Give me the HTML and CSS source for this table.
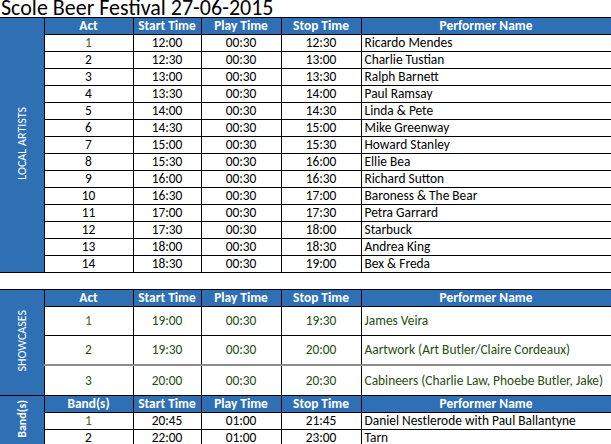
FILE: index.html
```html
<!DOCTYPE html>
<html>
<head>
<meta charset="utf-8">
<link rel="stylesheet" href="styles.css">
</head>
<body>
<div class="title">Scole Beer Festival 27-06-2015</div>
<table class="sched">
  <colgroup>
    <col class="c-label"><col class="c-act"><col class="c-start"><col class="c-play"><col class="c-stop"><col class="c-name">
  </colgroup>
  <tbody>
    <tr class="head">
      <td class="label" rowspan="15"><span class="vert">LOCAL ARTISTS</span></td>
      <td>Act</td><td>Start Time</td><td>Play Time</td><td>Stop Time</td><td>Performer Name</td>
    </tr>
    <tr><td class="first">1</td><td>12:00</td><td>00:30</td><td>12:30</td><td class="name">Ricardo Mendes</td></tr>
    <tr><td>2</td><td>12:30</td><td>00:30</td><td>13:00</td><td class="name">Charlie Tustian</td></tr>
    <tr><td>3</td><td>13:00</td><td>00:30</td><td>13:30</td><td class="name">Ralph Barnett</td></tr>
    <tr><td>4</td><td>13:30</td><td>00:30</td><td>14:00</td><td class="name">Paul Ramsay</td></tr>
    <tr><td>5</td><td>14:00</td><td>00:30</td><td>14:30</td><td class="name">Linda &amp; Pete</td></tr>
    <tr><td>6</td><td>14:30</td><td>00:30</td><td>15:00</td><td class="name">Mike Greenway</td></tr>
    <tr><td>7</td><td>15:00</td><td>00:30</td><td>15:30</td><td class="name">Howard Stanley</td></tr>
    <tr><td>8</td><td>15:30</td><td>00:30</td><td>16:00</td><td class="name">Ellie Bea</td></tr>
    <tr><td>9</td><td>16:00</td><td>00:30</td><td>16:30</td><td class="name">Richard Sutton</td></tr>
    <tr><td>10</td><td>16:30</td><td>00:30</td><td>17:00</td><td class="name">Baroness &amp; The Bear</td></tr>
    <tr><td>11</td><td>17:00</td><td>00:30</td><td>17:30</td><td class="name">Petra Garrard</td></tr>
    <tr><td>12</td><td>17:30</td><td>00:30</td><td>18:00</td><td class="name">Starbuck</td></tr>
    <tr><td>13</td><td>18:00</td><td>00:30</td><td>18:30</td><td class="name">Andrea King</td></tr>
    <tr><td>14</td><td>18:30</td><td>00:30</td><td>19:00</td><td class="name">Bex &amp; Freda</td></tr>
    <tr class="gap"><td colspan="6"></td></tr>
    <tr class="head">
      <td class="label" rowspan="4"><span class="vert">SHOWCASES</span></td>
      <td>Act</td><td>Start Time</td><td>Play Time</td><td>Stop Time</td><td>Performer Name</td>
    </tr>
    <tr class="show show1"><td class="first">1</td><td>19:00</td><td>00:30</td><td>19:30</td><td class="name">James Veira</td></tr>
    <tr class="show show2"><td>2</td><td>19:30</td><td>00:30</td><td>20:00</td><td class="name">Aartwork (Art Butler/Claire Cordeaux)</td></tr>
    <tr class="show show3"><td>3</td><td>20:00</td><td>00:30</td><td>20:30</td><td class="name">Cabineers (Charlie Law, Phoebe Butler, Jake)</td></tr>
    <tr class="head">
      <td class="label bold" rowspan="3"><span class="vert">Band(s)</span></td>
      <td>Band(s)</td><td>Start Time</td><td>Play Time</td><td>Stop Time</td><td>Performer Name</td>
    </tr>
    <tr><td class="first">1</td><td>20:45</td><td>01:00</td><td>21:45</td><td class="name">Daniel Nestlerode with Paul Ballantyne</td></tr>
    <tr><td>2</td><td>22:00</td><td>01:00</td><td>23:00</td><td class="name">Tarn</td></tr>
  </tbody>
</table>
</body>
</html>
```

FILE: styles.css
```css
html, body {
  margin: 0;
  padding: 0;
  background: #ffffff;
  overflow: hidden;
}
body {
  width: 611px;
  height: 444px;
  font-family: Carlito, "Liberation Sans", Arial, sans-serif;
  color: #000;
}
.title {
  height: 17px;
  line-height: 15px;
  font-size: 22px;
  padding-left: 1px;
  white-space: nowrap;
}
.sched {
  width: 611px;
  table-layout: fixed;
  border-collapse: collapse;
  font-size: 13.4px;
}
.c-label { width: 44px; }
.c-act { width: 89px; }
.c-start { width: 68px; }
.c-play { width: 80px; }
.c-stop { width: 80px; }
.c-name { width: 250px; }
.sched td {
  border: 1px solid #000;
  height: 16px;
  padding: 0;
  line-height: 16px;
  text-align: center;
  white-space: nowrap;
  overflow: hidden;
}
.sched td.name {
  text-align: left;
  padding-left: 3px;
}
.head td {
  background: #2f70b5;
  color: #fff;
  font-weight: bold;
}
.sched td.label {
  background: #2f70b5;
  color: #fff;
  vertical-align: middle;
  text-align: center;
  font-weight: normal;
  border-left: none;
}
.sched td.label.bold {
  font-weight: bold;
}
.vert {
  display: inline-block;
  writing-mode: vertical-rl;
  transform: rotate(180deg);
  font-size: 12px;
}
.first {
  color: #4f6228;
}
.gap td {
  border-left: none;
  border-right: none;
  background: #fff;
}
.show td {
  color: #1f4d12;
  height: 28px;
}
.show td.first {
  color: #4f6228;
}
.show2 td {
  border-bottom: 2px solid #8c8c8c;
}
.show3 td {
  height: 29px;
}
```
